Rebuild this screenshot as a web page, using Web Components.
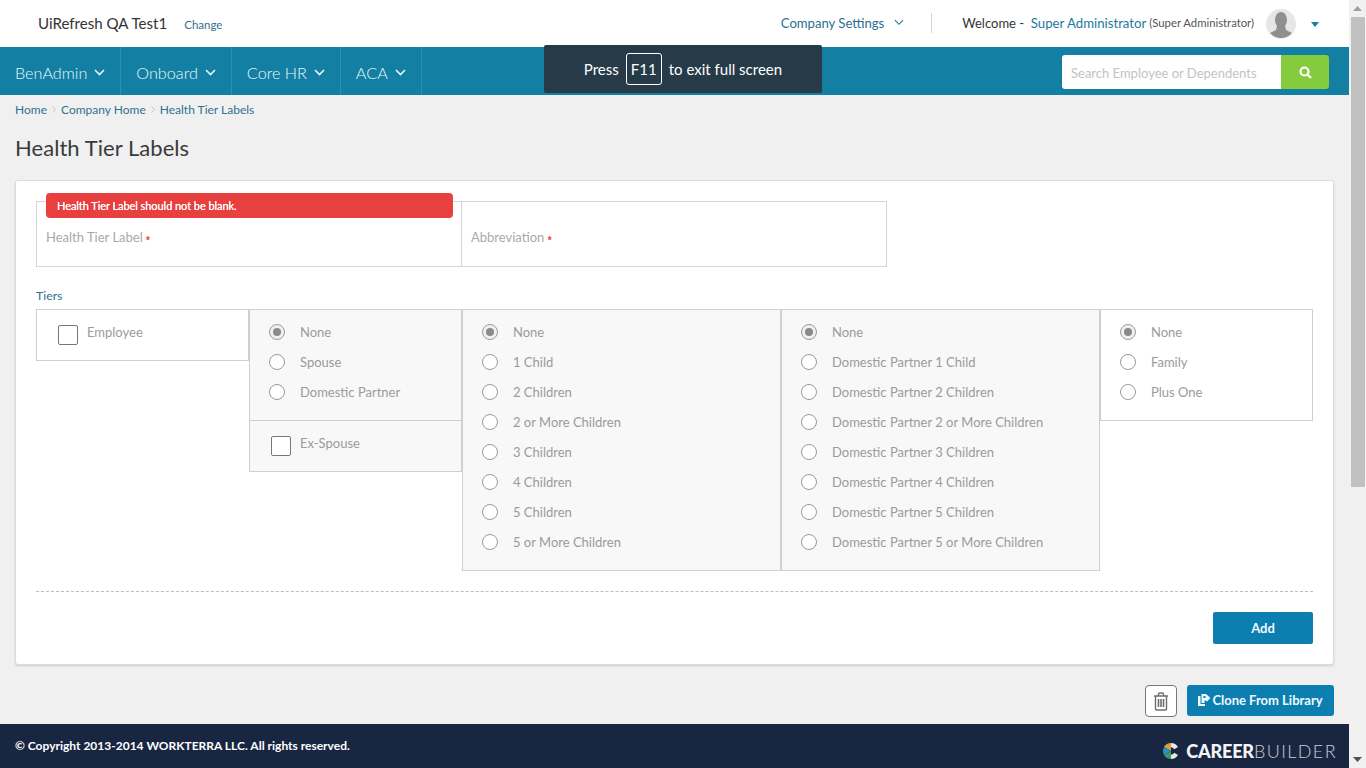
<!DOCTYPE html>
<html lang="en"><head><meta charset="utf-8"><title>Health Tier Labels</title>
<style>
html,body{margin:0;padding:0;height:768px;overflow:hidden;background:#f0f0f0;font-family:Lato,"Liberation Sans",sans-serif;color:#333}
body{display:flex}
#main{width:1349px;height:768px;display:flex;flex-direction:column;position:relative}
</style></head><body>
<div id="main">
<app-header></app-header>
<app-nav></app-nav>
<bread-crumbs></bread-crumbs>
<page-title>Health Tier Labels</page-title>
<tier-form></tier-form>
<page-actions></page-actions>
<app-footer></app-footer>
<fs-toast></fs-toast>
</div>
<scroll-rail></scroll-rail>
<script>
function def(name,html){
  customElements.define(name,class extends HTMLElement{
    constructor(){super();this.attachShadow({mode:'open'}).innerHTML=html;}
  });
}
const chev=(c,w=11,sw=1.6)=>`<svg width="${w}" height="7" viewBox="0 0 11 7" fill="none" stroke="${c}" stroke-width="${sw}"><path d="M1 1l4.5 4.5L10 1"/></svg>`;

def('app-header',`<style>
:host{display:flex;align-items:center;height:47px;background:#fff;flex:none;box-sizing:border-box;padding:0 0 2px 38px;color:#333}
.co{font-size:15.1px;color:#333}
.chg{font-size:11.5px;color:#31708f;margin-left:17px;margin-top:3px}
.sp{flex:1}
.cs{font-size:13.1px;color:#2a6f8f;display:flex;align-items:center;gap:10px}
.div{width:1px;height:20px;background:#d5d5d5;margin:0 30px 0 27px}
.wel{font-size:13px;color:#333;white-space:pre}
.sa{font-size:13.2px;color:#1a7a9c}
.ro{font-size:11.3px;color:#555;margin-left:3px}
.av{margin:2px 0 0 12px;width:30px;height:30px;flex:none;display:block}
.car{margin:4px 30px 0 15px;width:0;height:0;border:4px solid transparent;border-top:5px solid #13809f;border-bottom:0}
</style>
<span class="co">UiRefresh QA Test1</span><span class="chg">Change</span><span class="sp"></span>
<span class="cs">Company Settings ${chev('#2a6f8f',10,1.2)}</span><span class="div"></span>
<span class="wel">Welcome - </span><span class="sa">&nbsp;Super Administrator</span><span class="ro">(Super Administrator)</span>
<svg class="av" viewBox="0 0 30 30"><circle cx="15" cy="15" r="15" fill="#e6e6e6"/><clipPath id="c"><circle cx="15" cy="15" r="14"/></clipPath><g clip-path="url(#c)" fill="#8f8f8f"><ellipse cx="15" cy="11" rx="6" ry="8"/><path d="M11 17h8l1 4 6 3v7H4v-7l6-3z"/></g></svg>
<span class="car"></span>`);

def('nav-item',`<style>
:host{display:flex;align-items:center;height:48px;padding:3px 15px 0;gap:7px;border-right:1px solid #2f90ad;color:#e8f7fb;font-size:16.2px;font-weight:300;box-sizing:border-box}
</style><slot></slot>${chev('#e8f7fb',11)}`);

def('app-nav',`<style>
:host{display:flex;align-items:center;height:48px;background:#137fa3;flex:none;position:relative}
nav{display:flex}
.sp{flex:1}
.s{display:flex;height:34px;margin:2px 20px 0 0;border-radius:3px;overflow:hidden}
.i{width:219px;background:#fff;color:#c3c3c3;font-size:13px;line-height:36px;padding-left:9px;box-sizing:border-box;white-space:nowrap;overflow:hidden}
.b{width:48px;background:#84cc3d;display:flex;align-items:center;justify-content:center}
</style>
<nav><nav-item>BenAdmin</nav-item><nav-item>Onboard</nav-item><nav-item>Core HR</nav-item><nav-item>ACA</nav-item></nav>
<span class="sp"></span>
<div class="s"><div class="i">Search Employee or Dependents</div><div class="b"><svg width="13" height="13" viewBox="0 0 13 13" fill="none" stroke="#fff" stroke-width="2.2"><circle cx="5.5" cy="5.500" r="4"/><path d="M8.500 8.500l3.500 3.500"/></svg></div></div>`);

def('bread-crumbs',`<style>
:host{display:flex;align-items:center;height:29px;padding-left:15px;font-size:12px;color:#31708f;flex:none;gap:5px}
svg{flex:none}
</style><span>Home</span><svg width="4" height="7" viewBox="0 0 4 7" fill="none" stroke="#c4c4c4"><path d="M.5.500l3 3-3 3"/></svg><span>Company Home</span><svg width="4" height="7" viewBox="0 0 4 7" fill="none" stroke="#c4c4c4"><path d="M.5.500l3 3-3 3"/></svg><span>Health Tier Labels</span>`);

def('page-title',`<style>
:host{display:block;height:56px;padding:10px 0 0 15px;box-sizing:border-box;font-size:22px;letter-spacing:.05px;color:#3a3a3a;line-height:28px;flex:none}
</style><slot></slot>`);

def('text-field',`<style>
:host{display:block;flex:1;height:66px;border:1px solid #d4d4d4;box-sizing:border-box;padding:26px 0 0 9px;font-size:13px;color:#a9a9a9;line-height:18px;margin-left:-1px}
b{color:#e84040;font-weight:700;font-size:10px;font-family:"Liberation Sans",sans-serif;vertical-align:-2px}
</style><slot></slot> <b>*</b>`);

def('tier-radio',`<style>
:host{display:flex;align-items:center;height:30px;font-size:13px;color:#9b9b9b;gap:15px}
.r{width:16px;height:16px;border:1px solid #9a9a9a;border-radius:50%;box-sizing:border-box;background:#fff;flex:none;display:flex;align-items:center;justify-content:center}
:host([on]) .r::after{content:"";width:8px;height:8px;border-radius:50%;background:#8a8a8a}
:host([on]) .r{background:#f0f0f0}
</style><span class="r"></span><span><slot></slot></span>`);

def('tier-box',`<style>
:host{display:block;box-sizing:border-box;border:1px solid #cfcfcf;padding:7px 0 13px 19px;background:#f8f8f8}
:host([plain]){background:#fff}
</style><slot></slot>`);

def('tier-check',`<style>
:host{display:flex;align-items:flex-start;box-sizing:border-box;border:1px solid #cfcfcf;height:52px;padding:15px 0 0 21px;font-size:13px;color:#9b9b9b;gap:9px;line-height:14px;background:#fff}
:host([grey]){background:#f8f8f8;margin-top:-1px}
.c{width:20px;height:20px;border:1px solid #777;border-radius:2px;box-sizing:border-box;background:#fff;flex:none}
</style><span class="c"></span><span><slot></slot></span>`);

def('tier-form',`<style>
:host{display:block;width:1319px;height:485px;margin-left:15px;box-sizing:border-box;background:#fff;border:1px solid #dcdcdc;border-radius:3px;box-shadow:0 1px 2px rgba(0,0,0,.15);padding:20px 20px 0 20px;flex:none;position:relative}
.row{display:flex;width:851px;padding-left:1px;box-sizing:border-box}
.lbl{font-size:12.3px;color:#31708f;margin-top:22px;height:20px;line-height:14px}
.grid{display:grid;grid-template-columns:213px 213px 319px 319px 213px;align-items:start}
.col{display:flex;flex-direction:column}
.dash{border-top:1px dashed #bdbdbd;margin-top:20px;width:1277px}
.foot{display:flex;justify-content:flex-end;margin-top:20px;width:1277px}
.add{width:100px;height:32px;background:#0c7fb0;color:#f1fbff;font-weight:700;font-size:13px;border-radius:2px;display:flex;align-items:center;justify-content:center}
.err{position:absolute;left:30px;top:12px;width:407px;height:25px;background:#e83f3f;color:#fff;border-radius:4px;font-size:11px;line-height:25px;padding-left:11px;box-sizing:border-box;letter-spacing:-.06px;text-shadow:0 0 .6px #fff}
</style>
<div class="row"><text-field>Health Tier Label</text-field><text-field>Abbreviation</text-field></div>
<div class="err">Health Tier Label should not be blank.</div>
<div class="lbl">Tiers</div>
<div class="grid">
<tier-check>Employee</tier-check>
<div class="col"><tier-box style="height:112px"><tier-radio on>None</tier-radio><tier-radio>Spouse</tier-radio><tier-radio>Domestic Partner</tier-radio></tier-box><tier-check grey>Ex-Spouse</tier-check></div>
<tier-box><tier-radio on>None</tier-radio><tier-radio>1 Child</tier-radio><tier-radio>2 Children</tier-radio><tier-radio>2 or More Children</tier-radio><tier-radio>3 Children</tier-radio><tier-radio>4 Children</tier-radio><tier-radio>5 Children</tier-radio><tier-radio>5 or More Children</tier-radio></tier-box>
<tier-box><tier-radio on>None</tier-radio><tier-radio>Domestic Partner 1 Child</tier-radio><tier-radio>Domestic Partner 2 Children</tier-radio><tier-radio>Domestic Partner 2 or More Children</tier-radio><tier-radio>Domestic Partner 3 Children</tier-radio><tier-radio>Domestic Partner 4 Children</tier-radio><tier-radio>Domestic Partner 5 Children</tier-radio><tier-radio>Domestic Partner 5 or More Children</tier-radio></tier-box>
<tier-box plain style="height:112px"><tier-radio on>None</tier-radio><tier-radio>Family</tier-radio><tier-radio>Plus One</tier-radio></tier-box>
</div>
<div class="dash"></div>
<div class="foot"><div class="add">Add</div></div>`);

def('page-actions',`<style>
:host{display:flex;justify-content:flex-end;align-items:flex-start;gap:10px;width:1334px;flex:none;margin-top:20px;height:39px}
.t{width:32px;height:32px;border:1px solid #777;border-radius:4px;box-sizing:border-box;background:#fff;display:flex;align-items:center;justify-content:center}
.c{width:147px;height:31px;background:#0c7fb0;color:#eefaff;font-weight:700;font-size:13px;border-radius:3px;display:flex;align-items:center;justify-content:center;gap:1px;padding:0 1px 2px 0;box-sizing:border-box}
</style>
<div class="t"><svg width="16" height="19" viewBox="0 0 16 19" fill="none" stroke="#6e6e6e" stroke-width="1.400"><path d="M1 4h14M5.500 4V2a1 1 0 0 1 1-1h3a1 1 0 0 1 1 1v2M2.500 4v13a1 1 0 0 0 1 1h9a1 1 0 0 0 1-1V4"/><path d="M5.500 7v8M8 7v8M10.500 7v8" stroke-width="1.600"/></svg></div>
<div class="c"><svg width="14" height="14" viewBox="0 0 14 14"><path d="M1 3h2.500v8H8v2H1z" fill="#eefaff"/><path d="M4.500 1h4.500l4.500 4-4 4V7.500H7.500V10h-3z" fill="#eefaff"/><path d="M6.500 3h2v2h-2z" fill="#0c7fb0"/></svg>Clone From Library</div>`);

def('app-footer',`<style>
:host{display:flex;align-items:center;justify-content:space-between;height:44px;background:#192642;flex:none;padding:0 12px 0 15px;color:#fff}
.c{font-size:12px;font-weight:700;margin-top:-1px}
.l{display:flex;align-items:center;gap:7px;margin-top:10px;line-height:20px;white-space:nowrap}
.l b{font-weight:900;color:#f4f4f4;font-size:18.1px;letter-spacing:-.2px}.l span{font-weight:300;color:#c9ccd3;font-size:18px;letter-spacing:1.4px}
</style><span class="c">© Copyright 2013-2014 WORKTERRA LLC. All rights reserved.</span>
<div class="l"><svg width="16" height="16" viewBox="0 0 17 17"><path d="M8.500 0A8.500 8.500 0 0 0 1.100 4.300L8.500 8.500V0z" fill="#d9a032"/><path d="M1.100 4.300A8.500 8.500 0 0 0 1.100 12.700L8.500 8.500z" fill="#2a8fc4"/><path d="M1.100 12.700A8.500 8.500 0 0 0 8.500 17V8.500z" fill="#3d9a5f"/><path d="M8.500 0a8.500 8.500 0 0 1 7.400 4.300l-4 2.300A4 4 0 0 0 8.500 4.500zM15.900 12.700A8.500 8.500 0 0 1 8.500 17v-4.500a4 4 0 0 0 3.400-2.100z" fill="#e9e9e9"/></svg><div><b>CAREER</b><span>BUILDER</span></div></div>`);

def('fs-toast',`<style>
:host{position:absolute;left:544px;top:45px;width:278px;height:48px;background:#263a48;border-radius:2px;display:flex;align-items:center;justify-content:center;color:#fff;font-size:15px;gap:7px;box-sizing:border-box}
.k{border:1px solid #fff;border-radius:3px;height:32px;width:36px;display:flex;align-items:center;justify-content:center;box-sizing:border-box}
</style><span>Press</span><span class="k">F11</span><span>to exit full screen</span>`);

def('scroll-rail',`<style>
:host{display:flex;flex-direction:column;align-items:center;width:17px;height:768px;background:#f1f1f1;flex:none}
.a{height:17px;display:flex;align-items:center;justify-content:center;flex:none}
.th{height:470px;width:14px;background:#c1c1c1;flex:none}
.sp{flex:1}
</style><div class="a"><svg width="9" height="5"><path d="M0 5L4.500 0L9 5z" fill="#a0a0a0"/></svg></div><div class="th"></div><div class="sp"></div><div class="a"><svg width="9" height="5"><path d="M0 0L4.500 5L9 0z" fill="#505050"/></svg></div>`);
</script>
</body></html>
